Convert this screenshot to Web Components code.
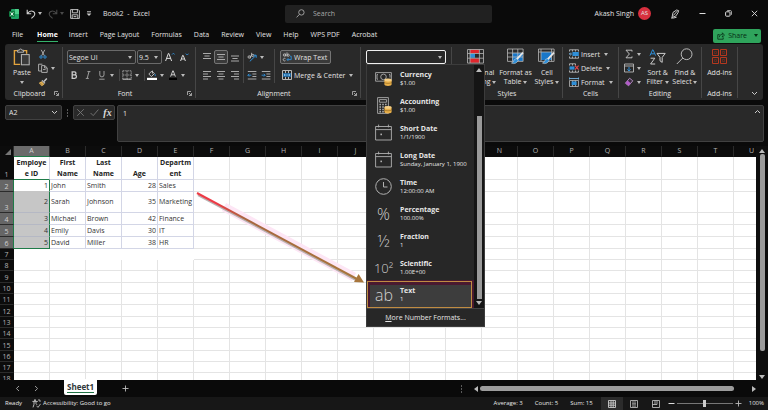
<!DOCTYPE html>
<html lang="en">
<head>
<meta charset="utf-8">
<title>Book2 - Excel</title>
<style>
  html, body { margin: 0; height: 100%; background: #0a0a0a; }
  body { font: 7px/9px "Open Sans", "Noto Sans", sans-serif; color: #e2e2e2; overflow: hidden; }
</style>
</head>
<body>
<xl-window>
  <xl-titlebar></xl-titlebar>
  <xl-tabs></xl-tabs>
  <xl-ribbon>
    <xl-group label="Clipboard" launcher>
      <xl-stack style="padding-left: 8px">
        <xl-tool tall icon="paste">Paste<br><xl-caret></xl-caret></xl-tool>
      </xl-stack>
      <xl-stack style="padding-left: 5px">
        <xl-tool icon="cut" label="Cut"></xl-tool>
        <xl-tool icon="copy" label="Copy" caret></xl-tool>
        <xl-tool icon="brush" label="Format Painter"></xl-tool>
      </xl-stack>
    </xl-group>
    <xl-group label="Font" launcher>
      <xl-stack rows="2" style="padding-left: 4px">
        <xl-row>
          <xl-combo label="Font" value="Segoe UI" style="width: 69px"></xl-combo>
          <xl-combo label="Font Size" value="9.5" style="width: 25px; margin: 0 1px"></xl-combo>
          <xl-tool icon="grow" label="Increase Font Size"></xl-tool>
          <xl-tool icon="shrink" label="Decrease Font Size"></xl-tool>
        </xl-row>
        <xl-row>
          <xl-tool icon="bold" label="Bold"></xl-tool>
          <xl-tool icon="italic" label="Italic"></xl-tool>
          <xl-tool icon="underline" label="Underline" caret></xl-tool>
          <xl-rule></xl-rule>
          <xl-tool icon="borders" label="Borders" caret></xl-tool>
          <xl-rule></xl-rule>
          <xl-tool icon="fill" label="Fill Color" caret></xl-tool>
          <xl-tool icon="color" label="Font Color" caret></xl-tool>
        </xl-row>
      </xl-stack>
    </xl-group>
    <xl-group label="Alignment" launcher>
      <xl-stack rows="2" style="padding-left: 4px">
        <xl-row>
          <xl-tool icon="top" label="Top Align"></xl-tool>
          <xl-tool icon="middle" label="Middle Align" pressed></xl-tool>
          <xl-tool icon="bottom" label="Bottom Align"></xl-tool>
        </xl-row>
        <xl-row>
          <xl-tool icon="left" label="Align Left"></xl-tool>
          <xl-tool icon="center" label="Center"></xl-tool>
          <xl-tool icon="right" label="Align Right"></xl-tool>
        </xl-row>
      </xl-stack>
      <xl-rule tall></xl-rule>
      <xl-stack rows="2">
        <xl-row><xl-tool icon="orient" label="Orientation" caret></xl-tool></xl-row>
        <xl-row>
          <xl-tool icon="outdent" label="Decrease Indent"></xl-tool>
          <xl-tool icon="indent" label="Increase Indent"></xl-tool>
        </xl-row>
      </xl-stack>
      <xl-rule tall></xl-rule>
      <xl-stack rows="2" style="padding-left: 4px">
        <xl-tool icon="wrap" pressed>Wrap Text</xl-tool>
        <xl-tool icon="merge" caret>Merge &amp; Center</xl-tool>
      </xl-stack>
    </xl-group>
    <xl-group>
      <xl-stack rows="2" style="flex: 1; padding: 3px 5px 0">
        <xl-combo label="Number Format" value="" open>
          <xl-format-menu></xl-format-menu>
        </xl-combo>
      </xl-stack>
    </xl-group>
    <xl-group label="Styles">
      <xl-row even>
        <xl-tool tall icon="conditional">Conditional<br>Formatting <xl-caret></xl-caret></xl-tool>
        <xl-tool tall icon="table">Format as<br>Table <xl-caret></xl-caret></xl-tool>
        <xl-tool tall icon="styles">Cell<br>Styles <xl-caret></xl-caret></xl-tool>
      </xl-row>
    </xl-group>
    <xl-group label="Cells">
      <xl-stack style="padding-left: 4px">
        <xl-tool icon="insert" caret>Insert</xl-tool>
        <xl-tool icon="delete" caret>Delete</xl-tool>
        <xl-tool icon="format" caret>Format</xl-tool>
      </xl-stack>
    </xl-group>
    <xl-group label="Editing">
      <xl-stack style="padding-left: 3px">
        <xl-tool icon="sum" label="AutoSum" caret></xl-tool>
        <xl-tool icon="filldown" label="Fill" caret></xl-tool>
        <xl-tool icon="eraser" label="Clear" caret></xl-tool>
      </xl-stack>
      <xl-row even style="flex: 1">
        <xl-tool tall icon="sort">Sort &amp;<br>Filter <xl-caret></xl-caret></xl-tool>
        <xl-tool tall icon="find">Find &amp;<br>Select <xl-caret></xl-caret></xl-tool>
      </xl-row>
    </xl-group>
    <xl-group label="Add-ins">
      <xl-row even><xl-tool tall icon="addins">Add-ins</xl-tool></xl-row>
    </xl-group>
    <xl-group collapse></xl-group>
  </xl-ribbon>
  <xl-formula-bar></xl-formula-bar>
  <xl-sheet></xl-sheet>
  <xl-sheet-bar></xl-sheet-bar>
  <xl-status-bar></xl-status-bar>
</xl-window>

<script>
const G = '#b8b8b8'
const B = '#2f8fd8'
const GRID = `<path d="M.5 .5h9v9h-9zM.5 3.5h9M.5 6.5h9M3.5 .5v9M6.5 .5v9" stroke="${G}"/>`
const PEN = `<path d="M16 4.6L9.4 11.6" stroke="#e6e6e6" stroke-width="1.8"/><path d="M9.6 10.6q-2.4.2-3 2.4-.6 1.8-2.2 2 4.4 2 6.8-2.6z" fill="${B}" stroke="#dcdcdc" stroke-width=".5"/>`

// name: [width, height, svg body]
const ICONS = {
  excel: [10, 10, '<rect x="2" y="0" width="8" height="10" rx="1" fill="#21a366"/><path d="M6 0h3a1 1 0 0 1 1 1v4H6z" fill="#4fd08c"/><rect y="2" width="6" height="6" rx="1" fill="#107c41"/><path d="M1.7 3.4l2.6 3.2M4.3 3.4L1.7 6.6" stroke="#fff" stroke-width=".9"/>'],
  undo: [10, 10, '<path d="M1.2 .8v4h4M1.4 4.6C3 2.4 5.2 1.4 7.2 2.4c2 1 2 3.4.6 4.8L5.4 9.4" stroke="#d0d0d0" stroke-width="1.1"/>'],
  redo: [10, 10, '<path d="M8.8 .8v4h-4M8.6 4.6C7 2.4 4.8 1.4 2.8 2.4c-2 1-2 3.4-.6 4.8l2.4 2.2" stroke="#4a4a4a" stroke-width="1.1"/>'],
  save: [10, 10, '<path d="M.6 .6h7.6l1.2 1.2v7.6H.6zM2.4 .6v3.2h5V.6M2.2 9.4V5.8h5.6v3.6M3.6 7.6h2.8" stroke="#d0d0d0" stroke-width=".9"/>'],
  qat: [6, 6, '<path d="M1 .8h4" stroke="#ccc"/><path d="M.6 2.6h4.8L3 5z" fill="#ccc"/>'],
  search: [9, 9, '<circle cx="5.4" cy="3.4" r="2.7" stroke="#aaa" stroke-width=".9"/><path d="M3.4 5.4L.6 8.4" stroke="#aaa" stroke-width=".9"/>'],
  pen: [10, 10, '<path d="M2 8.4l1-5L6.6 1l2 .6-.6 2.2L5.6 7.2zM3.2 6.6L7.4 2M1 9h2.6l3-.8" stroke="#ddd" stroke-width=".9"/>'],
  min: [7, 7, '<path d="M.5 3.5h6" stroke="#ddd"/>'],
  restore: [7, 7, '<rect x=".6" y="1.8" width="4.4" height="4.4" rx=".8" stroke="#ddd"/><path d="M2.2 .6h3.2q1 0 1 1v3.2" stroke="#ddd" stroke-width=".8"/>'],
  close: [7, 7, '<path d="M.8 .8l5.4 5.4M6.2 .8L.8 6.2" stroke="#ddd" stroke-width=".9"/>'],
  share: [8, 8, '<path d="M2.6 2.6H.8v4.6h5.4V5.4M2.4 5.2c0-2 1.2-2.8 3-2.8V.8l2 2.3-2 2V3.6" stroke="#062d14" stroke-width=".8"/>'],
  paste: [17, 18, `<path d="M4.6 2.6H1.4v13.8h5.8M10.4 2.6h3.2v3.2" stroke="#e2a33d" stroke-width="1.4"/><path d="M4.6 4.2V2.2h1.8a1.2 1.2 0 0 1 2.4 0h1.8v2z" stroke="${G}" fill="#292929"/><rect x="8.4" y="6.6" width="7.8" height="10.2" fill="#3a3a3a" stroke="${G}"/>`],
  cut: [10, 10, `<path d="M3.2 .8l3.2 6M6.8 .8l-3.2 6" stroke="${G}" stroke-width=".9"/><circle cx="3" cy="8" r="1.2" stroke="${B}"/><circle cx="7" cy="8" r="1.2" stroke="${B}"/>`],
  copy: [10, 10, `<path d="M3.4 8H.6V1.2h3.8M3.6 2.6h3.2l2.4 2.2v4.6H3.6zM6.6 2.8V5h2.4M5 6.6h2.6" stroke="${G}" stroke-width=".9"/>`],
  brush: [10, 10, '<path d="M6 4.6L8.8 1.6" stroke="#ccc" stroke-width="1.4"/><path d="M4 3.4l3 3" stroke="#ccc" stroke-width="1.2"/><path d="M3.6 4.2L.8 6l3 3.2 2.6-2z" fill="#e8b75a"/><path d="M2 7l1.6-.8M3 8.2l1.6-1" stroke="#6b4a12" stroke-width=".5"/>'],
  grow: [10, 10, `<path d="M.6 9L3.4 1.4h.4L6.6 9M1.6 6.4h4" stroke="#ddd"/><path d="M7 2.6L8.4 1.2l1.4 1.4" stroke="${B}" stroke-width=".9"/>`],
  shrink: [10, 10, `<path d="M1.6 9l2-5.6h.6L6.4 9M2.4 7h3.2" stroke="#ddd"/><path d="M6.8 1.6L8.2 3l1.4-1.4" stroke="${B}" stroke-width=".9"/>`],
  bold: [10, 10, '<path d="M3.2 1.8h2.2a1.5 1.5 0 0 1 0 3.1H3.2zM3.2 4.9h2.6a1.7 1.7 0 0 1 0 3.4H3.2z" stroke="#ccc" stroke-width="1.3"/>'],
  italic: [10, 10, '<path d="M4.4 1.6h3M2.8 8.4h3M6 1.6L4.2 8.4" stroke="#aaa" stroke-width=".9"/>'],
  underline: [10, 10, '<path d="M2.8 1v3.8a2.1 2.1 0 0 0 4.2 0V1M2.2 9.2h5.4" stroke="#aaa" stroke-width=".9"/>'],
  borders: [10, 10, `<path d="M.8 .8h8.4v8.4H.8zM5 .8v8.4M.8 5h8.4" stroke="${G}" stroke-width=".8" stroke-dasharray="1.2 .6"/><path d="M.6 9.2h8.8" stroke="${G}"/>`],
  fill: [10, 10, '<path d="M4.8 1L1.8 4l2.6 2.6 3-3zM5.4 .6v3" stroke="#ccc" stroke-width=".9"/><path d="M8 3.6q1.6 2 .2 2.6Q7 5.6 8 3.6" fill="#2f8fd8"/><rect y="7.8" width="10" height="2.2" fill="#fff"/>'],
  color: [10, 10, '<path d="M2.6 6.6l2.2-5.8h.4l2.2 5.8M3.4 4.8h3.2" stroke="#ccc"/><rect x="1" y="7.8" width="8" height="2.2" fill="#000"/>'],
  top: [10, 10, `<path d="M1 1.5h8M2.4 4h5.2M1 6.5h8" stroke="${G}" stroke-width=".9"/>`],
  middle: [10, 10, `<path d="M1 2.5h8M2.4 5h5.2M1 7.5h8" stroke="${G}" stroke-width=".9"/>`],
  bottom: [10, 10, `<path d="M1 4h8M2.4 6.5h5.2M1 9h8" stroke="${G}" stroke-width=".9"/>`],
  left: [10, 10, `<path d="M1 1.5h8M1 4h5M1 6.5h8M1 9h5" stroke="${G}" stroke-width=".9"/>`],
  center: [10, 10, `<path d="M1 1.5h8M2.5 4h5M1 6.5h8M2.5 9h5" stroke="${G}" stroke-width=".9"/>`],
  right: [10, 10, `<path d="M1 1.5h8M4 4h5M1 6.5h8M4 9h5" stroke="${G}" stroke-width=".9"/>`],
  orient: [10, 10, `<g stroke="#ccc" stroke-width=".8"><circle cx="2.2" cy="5" r="1.2"/><path d="M3.4 3.6v2.8M4.6 .8v3.8"/><circle cx="5.8" cy="3.4" r="1.1"/></g><path d="M2.8 9.4L9 3.4M6.6 3.2H9.2v2.6" stroke="${B}"/>`],
  outdent: [10, 10, `<path d="M.8 1.5h8.6M5.4 4h4M5.4 6.5h4M.8 9h8.6" stroke="${G}" stroke-width=".9"/><path d="M4.4 5.2H.8M2.2 3.8L.8 5.2l1.4 1.4" stroke="${B}" stroke-width=".9"/>`],
  indent: [10, 10, `<path d="M.8 1.5h8.6M5.4 4h4M5.4 6.5h4M.8 9h8.6" stroke="${G}" stroke-width=".9"/><path d="M.6 5.2h3.6M2.8 3.8l1.4 1.4-1.4 1.4" stroke="${B}" stroke-width=".9"/>`],
  wrap: [10, 10, `<g stroke="#ccc" stroke-width=".8"><circle cx="2.4" cy="3" r="1.1"/><path d="M3.6 1.6v2.8M5 .4v4"/><circle cx="6.2" cy="3.2" r="1.1"/><path d="M3.4 6.6a1.3 1.3 0 1 0 0 2"/></g><path d="M8 4.2h1.2v3.4H5.2M6.4 6.2L5 7.6 6.4 9" stroke="${B}" stroke-width=".9"/>`],
  merge: [10, 10, `${GRID}<rect x="1" y="3" width="8" height="4" fill="#1d5f96"/><path d="M2 5h6M3.2 3.8L2 5l1.2 1.2M6.8 3.8L8 5 6.8 6.2" stroke="#7fc4f5" stroke-width=".8"/>`],
  conditional: [17, 15, `<rect x="3" y=".6" width="9" height="3.6" fill="#e0262d"/><rect x="3" y="4.8" width="5" height="4" fill="${B}"/><rect x="3" y="9.4" width="9.4" height="4.4" fill="#e0262d"/><path d="M.5 .5h16v13.6H.5zM.5 4.5h16M.5 9.2h16M3 .5v13.6M12.4 .5v13.6" stroke="${G}" stroke-width=".8"/>`],
  table: [17, 17, `<rect x="5" y="5" width="11" height="8" fill="#1877c9"/><path d="M.5 1h15.6v12.4H.5zM.5 5h15.6M.5 9h15.6M5.6 1v12.4M10.8 1v12.4" stroke="${G}" stroke-width=".8"/>${PEN}`],
  styles: [17, 17, `<rect x="3" y="4" width="11" height="8" fill="#1877c9"/><path d="M.5 1h15.6v12.4H.5zM.5 4h15.6M3 1v12.4M13.6 1v12.4" stroke="${G}" stroke-width=".8"/>${PEN}`],
  insert: [10, 10, `<path d="M.5 2.5V.8h9v1.7M.5 7.5v1.7h9V7.5M3.5 .8v1.7M6.5 .8v1.7M3.5 7.5v1.7M6.5 7.5v1.7" stroke="${G}" stroke-width=".9"/><rect x="3.4" y="3" width="6.4" height="4" fill="${B}"/><path d="M3 5H.4M1.8 3.6L.4 5l1.4 1.4" stroke="#7fc4f5" stroke-width=".8"/>`],
  delete: [10, 10, `<path d="M.5 2.5V.8h6v1.7M.5 7.5v1.7h9V7.5M3.5 .8v1.7M3.5 7.5v1.7M6.5 7.5v1.7" stroke="${G}" stroke-width=".9"/><rect x=".5" y="3.4" width="5" height="3.2" fill="${B}"/><path d="M6 2.6l3.6 4M9.6 2.6L6 6.6" stroke="#e8484d" stroke-width="1.1"/>`],
  format: [10, 10, `<path d="M.5 .5v2M9.5 .5v2M.5 1.5h9" stroke="#7fc4f5" stroke-width=".8"/><path d="M.5 3.5h9v6h-9zM3.5 3.5v6M6.5 3.5v6" stroke="${G}" stroke-width=".8"/><rect x="2.6" y="4.4" width="5" height="3.6" fill="${B}"/>`],
  sum: [10, 10, '<path d="M8 2.6V1.2H2L5.4 5 2 8.8h6V7.4" stroke="#ccc" stroke-width=".9"/>'],
  filldown: [10, 10, `<path d="M.5 1h9v8h-9zM.5 3h9" stroke="${G}" stroke-width=".9"/><path d="M5 4v4M3.4 6.4L5 8l1.6-1.6" stroke="${B}"/>`],
  eraser: [10, 10, '<path d="M5.6 1.2l3.2 2.6-4.2 5-3.2-2.6z" stroke="#c9a3d4" stroke-width=".8" fill="#3a2a40"/><path d="M3.6 3.6l3.2 2.6-2.2 2.6-3.2-2.6z" fill="#b25cc9"/>'],
  sort: [17, 16, `<path d="M1 6.6L3.6 .8h.4L6.6 6.6M2 4.8h3.6" stroke="${B}"/><path d="M1.6 9.2h4.2L1.6 15h4.6" stroke="#ccc"/><path d="M8 4.4h8.2l-3 4v5l-2.2-1.6V8.4z" stroke="#ccc"/>`],
  find: [17, 17, '<circle cx="10.6" cy="6.2" r="5.4" stroke="#bbb"/><path d="M6.8 10L.8 16" stroke="#bbb"/>'],
  addins: [17, 17, '<path d="M1.5 1.5h6v6h-6zM9.5 1.5h6v6h-6zM1.5 9.5h6v6h-6zM9.5 9.5h6v6h-6z" stroke="#b5381f"/><path d="M3.5 3.5h2v2h-2zM11.5 3.5h2v2h-2zM3.5 11.5h2v2h-2zM11.5 11.5h2v2h-2z" stroke="#8a2a18" stroke-width=".6"/>'],
  launcher: [5, 5, '<path d="M.5 4V.5H4M2 2l2.4 2.4M4.5 2v2.5H2" stroke="#bbb" stroke-width=".8"/>'],
  down: [7, 5, '<path d="M1 1l2.5 2.5L6 1" stroke="#ccc"/>'],
  up: [7, 5, '<path d="M1 4l2.5-2.5L6 4" stroke="#ccc"/>'],
  prev: [5, 7, '<path d="M4 1L1.4 3.5 4 6" stroke="#999"/>'],
  next: [5, 7, '<path d="M1 1l2.6 2.5L1 6" stroke="#999"/>'],
  plus: [7, 7, '<path d="M3.5 .5v6M.5 3.5h6" stroke="#bbb" stroke-width=".9"/>'],
  dots: [3, 8, '<path d="M1 1h1M1 4h1M1 7h1" stroke="#aaa"/>'],
  cancel: [9, 9, '<path d="M1.2 1.2l6.6 6.6M7.8 1.2L1.2 7.8" stroke="#777" stroke-width=".9"/>'],
  enter: [9, 9, '<path d="M.6 5l2.6 2.6 5.2-6" stroke="#777" stroke-width=".9"/>'],
  access: [9, 9, '<circle cx="3" cy="1.2" r=".9" fill="#ccc"/><path d="M.4 2.4h5.4M2 2.6v2.8L1 8.4M4 2.6v2l1 1.2" stroke="#ccc" stroke-width=".9"/><path d="M4.6 6.8L6 8.4l2.6-3.6M6 1h2v2" stroke="#ccc" stroke-width=".8"/>'],
  normal: [8, 8, '<path d="M.5 .5h7v7h-7zM.5 3h7M.5 5.2h7M3 .5v7M5.2 .5v7" stroke="#ccc" stroke-width=".9"/>'],
  layout: [8, 8, '<path d="M.5 .5h7v7h-7z" stroke="#ccc" stroke-width=".8"/><path d="M2 2h4M2 3.4h4M2 4.8h4M2 6.2h4" stroke="#bbb" stroke-width=".7"/>'],
  breaks: [8, 8, '<path d="M.5 .5h7v7h-7zM.5 4.5h4.5v-4M3 .5v4" stroke="#ccc" stroke-width=".8"/>'],
  currency: [17, 17, '<path d="M.6 2.6h15.8v8.6H.6zM3 4.6H2v4.6h1M14 4.6h1v3" stroke="#aaa" stroke-width=".9"/><circle cx="8.5" cy="6.9" r="2.8" stroke="#aaa" stroke-width=".9"/><path d="M9.4 10v4.6a3.6 1.4 0 0 0 7.2 0V10z" fill="#e9b04a"/><ellipse cx="13" cy="10" rx="3.6" ry="1.4" fill="#f5cf85"/><path d="M9.4 12.2a3.6 1.2 0 0 0 7.2 0" stroke="#7a5210" stroke-width=".5"/>'],
  accounting: [17, 17, '<path d="M2.6 .6h10.8v15.8H2.6zM4.4 2.6h7.2v2.6H4.4z" stroke="#aaa" stroke-width=".9"/><path d="M4.4 7.5h7.6M4.4 10h7.6M4.4 12.5h7.6M4.4 14.8h7.6" stroke="#aaa" stroke-width="1.4" stroke-dasharray="1.6 1.2"/><path d="M9.4 10.4v4.6a3.6 1.4 0 0 0 7.2 0v-4.6z" fill="#e9b04a"/><ellipse cx="13" cy="10.4" rx="3.6" ry="1.4" fill="#f5cf85"/><path d="M9.4 12.6a3.6 1.2 0 0 0 7.2 0" stroke="#7a5210" stroke-width=".5"/>'],
  date: [17, 17, '<path d="M.6 2.5h15.8v13.5H.6zM.6 5.6h15.8M3.6 .6v2.8M13.4 .6v2.8" stroke="#b0b0b0" stroke-width=".9"/><rect x="5.4" y="9.6" width="1.6" height="1.6" fill="#b0b0b0"/>'],
  time: [17, 17, '<circle cx="8.5" cy="8.5" r="7.8" stroke="#b0b0b0"/><path d="M8.5 4v5h4" stroke="#b0b0b0"/>']
}

/** Registers an element whose shadow root is cloned from a template. */
function define (name, html, setup) {
  const template = document.createElement('template')
  template.innerHTML = html
  customElements.define(name, class extends HTMLElement {
    constructor () {
      super()
      this.attachShadow({ mode: 'open' })
    }

    connectedCallback () {
      if (this.shadowRoot.firstChild) return
      this.shadowRoot.appendChild(template.content.cloneNode(true))
      if (setup) setup(this, this.shadowRoot)
    }
  })
}

define('xl-icon', '<style>:host { display: block; flex: none; } svg { display: block; fill: none; }</style>', (el, root) => {
  const [w, h, body] = ICONS[el.getAttribute('name')]
  root.innerHTML += `<svg width="${w}" height="${h}" viewBox="0 0 ${w} ${h}" aria-hidden="true">${body}</svg>`
})

define('xl-caret', `
  <style>
    :host { display: inline-block; vertical-align: middle; width: 0; border: 2px solid transparent; border-top: 3px solid #bbb; border-bottom: 0; }
    :host([up]) { border-top: 0; border-bottom: 4px solid #bbb; border-inline-width: 3px; }
    :host([down]) { border-top-width: 4px; border-inline-width: 3px; }
    :host([prev]) { border: 3px solid transparent; border-right: 4px solid #bbb; border-left: 0; }
    :host([next]) { border: 3px solid transparent; border-left: 4px solid #bbb; border-right: 0; }
    :host([dim]) { border-top-color: #4a4a4a; }
  </style>
`)

define('xl-window', `
  <style>
    :host { display: flex; flex-direction: column; height: 100vh; }
    ::slotted(*) { flex: none; }
    ::slotted(xl-sheet) { flex: 1; min-height: 0; }
  </style>
  <slot></slot>
`)

define('xl-titlebar', `
  <style>
    :host { display: grid; grid-template-columns: 285fr 207fr 276fr; align-items: center; height: 27px; }
    div { display: flex; align-items: center; }
    button { display: flex; align-items: center; gap: 2px; border: 0; padding: 0; background: none; color: inherit; font: inherit; }
    .left { gap: 7px; padding-left: 9px; }
    .left button { margin-right: -1px; }
    .left span { margin-left: 5px; }
    label { display: flex; align-items: center; gap: 8px; height: 18px; padding-left: 11px; border-radius: 2px; background: #212121; }
    input { flex: 1; min-width: 0; border: 0; padding: 0; background: none; font: inherit; outline: 0; }
    input::placeholder { color: #a8a8a8; opacity: 1; }
    .right { justify-content: flex-end; gap: 19px; padding-right: 10px; }
    .user { gap: 4px; }
    .avatar { width: 13px; height: 13px; border-radius: 50%; background: #d8303f; line-height: 13px; justify-content: center; font-size: 6px; }
  </style>
  <div class="left">
    <xl-icon name="excel"></xl-icon>
    <button aria-label="Undo"><xl-icon name="undo"></xl-icon><xl-caret></xl-caret></button>
    <button aria-label="Redo"><xl-icon name="redo"></xl-icon><xl-caret dim></xl-caret></button>
    <button aria-label="Save"><xl-icon name="save"></xl-icon></button>
    <button aria-label="Customize Quick Access Toolbar"><xl-icon name="qat"></xl-icon></button>
    <span>Book2&nbsp; -&nbsp; Excel</span>
  </div>
  <label><xl-icon name="search"></xl-icon><input type="search" placeholder="Search" aria-label="Search"></label>
  <div class="right">
    <div class="user">Akash Singh <div class="avatar">AS</div></div>
    <button aria-label="Draw"><xl-icon name="pen"></xl-icon></button>
    <button aria-label="Minimize"><xl-icon name="min"></xl-icon></button>
    <button aria-label="Restore"><xl-icon name="restore"></xl-icon></button>
    <button aria-label="Close"><xl-icon name="close"></xl-icon></button>
  </div>
`)

define('xl-tabs', `
  <style>
    :host { display: flex; align-items: center; justify-content: space-between; height: 17px; padding: 0 7px 0 12px; }
    nav { display: flex; gap: 12px; }
    a { color: inherit; text-decoration: none; line-height: 12px; border-bottom: 1px solid transparent; }
    a[aria-current] { font-weight: 700; border-color: #35b36b; color: #fff; margin: 0 -1px 0 2px; }
    button { display: flex; align-items: center; gap: 3px; height: 14px; padding: 0 3px 0 4px; border: 0; border-radius: 2px; background: #2fa45c; color: #062d14; font: inherit; }
    xl-caret { margin-left: 4px; border-top-color: #062d14; }
  </style>
  <nav>
    <a href="#file">File</a>
    <a href="#home" aria-current="page">Home</a>
    <a href="#insert">Insert</a>
    <a href="#layout">Page Layout</a>
    <a href="#formulas">Formulas</a>
    <a href="#data">Data</a>
    <a href="#review">Review</a>
    <a href="#view">View</a>
    <a href="#help">Help</a>
    <a href="#wps">WPS PDF</a>
    <a href="#acrobat">Acrobat</a>
  </nav>
  <button><xl-icon name="share"></xl-icon>Share<xl-caret></xl-caret></button>
`)

define('xl-ribbon', `
  <style>
    :host { display: grid; grid-template-columns: 58fr 133fr 165fr 91fr 111fr 56fr 83fr 36fr 25fr; margin: 0 5px; height: 56px; border-radius: 3px; background: #292929; }
    ::slotted(*) { min-width: 0; }
  </style>
  <slot></slot>
`)

define('xl-group', `
  <style>
    :host { display: flex; flex-direction: column; margin: 3px 0 2px; border-right: 1px solid #464646; }
    :host([collapse]) { border: 0; }
    .body { display: flex; height: 42px; }
    .foot { display: flex; align-items: center; height: 9px; }
    .foot span { flex: 1; text-align: center; white-space: nowrap; }
    button { border: 0; padding: 0 3px 0 0; background: none; }
    .fold { margin-left: auto; padding-right: 5px; }
  </style>
  <div class="body"><slot></slot></div>
  <div class="foot"><span></span></div>
`, (el, root) => {
  root.querySelector('span').textContent = el.getAttribute('label') || ''
  const foot = root.querySelector('.foot')
  if (el.hasAttribute('launcher')) {
    foot.insertAdjacentHTML('beforeend', '<button aria-label="Settings"><xl-icon name="launcher"></xl-icon></button>')
  }
  if (el.hasAttribute('collapse')) {
    foot.innerHTML = '<button class="fold" aria-label="Collapse the Ribbon"><xl-icon name="down"></xl-icon></button>'
  }
})

define('xl-stack', `
  <style>
    :host { display: flex; flex-direction: column; align-items: flex-start; box-sizing: border-box; }
    :host([rows]) { gap: 4px; padding-top: 3px; }
    ::slotted(xl-combo) { align-self: stretch; }
  </style>
  <slot></slot>
`)

define('xl-row', `
  <style>
    :host { display: flex; align-items: center; }
    :host([even]) { flex: 1; align-items: flex-start; justify-content: space-evenly; }
  </style>
  <slot></slot>
`)

define('xl-rule', `
  <style>
    :host { display: block; width: 1px; height: 12px; margin-left: 3px; background: #464646; }
    :host([tall]) { height: 34px; margin: 2px 1px 0; }
  </style>
`)

define('xl-tool', `
  <style>
    :host { display: block; }
    button { display: flex; align-items: center; gap: 3px; box-sizing: border-box; height: 14px; padding: 0 2px; border: 1px solid transparent; border-width: 1px 0; background: none; color: inherit; font: inherit; white-space: nowrap; }
    button.text { gap: 2px; }
    :host([pressed]) button { border: 1px solid #757575; padding-inline: 1px; border-radius: 2px; background: #3a3a3a; }
    :host([pressed]) button.text { padding-right: 3px; }
    :host([tall]) button { flex-direction: column; gap: 3px; height: auto; padding: 1px 0 0; border: 0; text-align: center; }
    :host([tall]) .icon { display: flex; align-items: center; height: 17px; }
    .end { margin-left: 2px; }
  </style>
  <button><span class="icon"></span></button>
`, (el, root) => {
  const button = root.querySelector('button')
  root.querySelector('.icon').innerHTML = `<xl-icon name="${el.getAttribute('icon')}"></xl-icon>`
  if (el.hasAttribute('label')) {
    button.setAttribute('aria-label', el.getAttribute('label'))
  } else {
    button.classList.add('text')
    button.insertAdjacentHTML('beforeend', '<span><slot></slot></span>')
  }
  if (el.hasAttribute('caret')) {
    button.insertAdjacentHTML('beforeend', `<xl-caret${el.hasAttribute('label') ? '' : ' class="end"'}></xl-caret>`)
  }
})

define('xl-combo', `
  <style>
    :host { display: block; position: relative; }
    .box { display: flex; align-items: center; box-sizing: border-box; height: 14px; padding-right: 3px; border: 1px solid #6a6a6a; border-radius: 2px; background: #292929; }
    :host([open]) .box { border-color: #f0f0f0; }
    select { flex: 1; min-width: 0; appearance: none; border: 0; padding: 0 0 0 1px; background: none; color: inherit; font: inherit; outline: 0; }
    ::slotted(*) { position: absolute; top: 100%; left: 0; z-index: 5; }
  </style>
  <div class="box"><select><option></option></select><xl-caret></xl-caret></div>
  <slot></slot>
`, (el, root) => {
  root.querySelector('select').setAttribute('aria-label', el.getAttribute('label'))
  root.querySelector('option').textContent = el.getAttribute('value')
})

define('xl-format-menu', `
  <style>
    :host { display: block; box-sizing: border-box; width: 119px; border: 1px solid #3c3c3c; background: #272727; color: #e6e6e6; }
    .list { display: grid; grid-template-columns: minmax(0, 1fr) 10px; border-bottom: 1px solid #444; }
    .track { display: flex; flex-direction: column; align-items: center; gap: 2px; padding: 3px 0; background: #151515; }
    .thumb { flex: 1; width: 5px; margin-top: 42px; background: #9a9a9a; }
    .more { display: block; width: 100%; padding: 4px 0; border: 0; background: none; color: inherit; font: inherit; text-align: center; }
  </style>
  <div class="list">
    <div role="listbox" aria-label="Number formats">
      <xl-format icon="currency" name="Currency">$1.00</xl-format>
      <xl-format icon="accounting" name="Accounting">$1.00</xl-format>
      <xl-format icon="date" name="Short Date">1/1/1900</xl-format>
      <xl-format icon="date" name="Long Date">Sunday, January 1, 1900</xl-format>
      <xl-format icon="time" name="Time">12:00:00 AM</xl-format>
      <xl-format glyph="%" name="Percentage">100.00%</xl-format>
      <xl-format glyph="½" name="Fraction">1</xl-format>
      <xl-format glyph="10²" name="Scientific">1.00E+00</xl-format>
      <xl-format glyph="ab" name="Text" marked>1</xl-format>
    </div>
    <div class="track"><xl-caret up></xl-caret><div class="thumb"></div><xl-caret down></xl-caret></div>
  </div>
  <button class="more"><u>M</u>ore Number Formats...</button>
`)

define('xl-format', `
  <style>
    :host { display: block; }
    button { display: grid; grid-template-columns: 33px 1fr; align-items: center; box-sizing: border-box; width: 100%; height: 27px; padding: 0; border: 0; background: none; color: inherit; font: inherit; font-size: 6px; text-align: left; white-space: nowrap; }
    .icon { display: flex; justify-content: center; color: #d0d0d0; font: 300 16px/20px "Open Sans", sans-serif; }
    .long { font-size: 13px; }
    b { display: block; font-size: 7px; }
    :host([marked]) { background: #4a1a30; padding-right: 2px; box-shadow: 0 -1px #4a1a30; }
    :host([marked]) button { grid-template-columns: 32px 1fr; border: 1px solid #c08c42; background: #3d3d3d; box-shadow: inset 0 3px #4a1a30, inset 2px 0 #4a1a30; }
  </style>
  <button role="option"><span class="icon"></span><span><b></b><slot></slot></span></button>
`, (el, root) => {
  const icon = root.querySelector('.icon')
  const glyph = el.getAttribute('glyph')
  if (glyph) {
    icon.textContent = glyph
    icon.classList.toggle('long', glyph.length > 2)
  } else {
    icon.innerHTML = `<xl-icon name="${el.getAttribute('icon')}"></xl-icon>`
  }
  root.querySelector('b').textContent = el.getAttribute('name')
})

define('xl-formula-bar', `
  <style>
    :host { display: flex; align-items: flex-start; height: 37px; padding: 5px 4px 4px 5px; }
    .box { display: flex; align-items: center; box-sizing: border-box; height: 15px; border: 1px solid #414141; border-radius: 2px; background: #292929; }
    .name { width: 57px; padding: 0 3px; }
    input, textarea { flex: 1; min-width: 0; border: 0; padding: 0; background: none; color: inherit; font: inherit; outline: 0; resize: none; }
    .grip { margin: 4px 4px 0; }
    .fx { width: 42px; justify-content: space-around; margin-right: 2px; }
    button { border: 0; padding: 0; background: none; color: #ddd; font: italic 700 10px/12px "Liberation Serif", serif; }
    .formula { flex: 1; height: 37px; align-items: flex-start; padding: 3px 2px 0 5px; }
  </style>
  <div class="box name"><input value="A2" aria-label="Name Box"><xl-icon name="down"></xl-icon></div>
  <xl-icon class="grip" name="dots"></xl-icon>
  <div class="box fx">
    <button aria-label="Cancel"><xl-icon name="cancel"></xl-icon></button>
    <button aria-label="Enter"><xl-icon name="enter"></xl-icon></button>
    <button aria-label="Insert Function">fx</button>
  </div>
  <div class="box formula"><textarea rows="3" aria-label="Formula Bar">1</textarea><xl-icon name="up"></xl-icon></div>
`)

const COLUMNS = 'ABCDEFGHIJKLMNOPQRSTU'.split('')
const HEIGHTS = [22, 12, 21, 12, 12, 12, 11, 11, 12, 11, 11, 12, 11, 11, 12, 11, 11, 11]
const DATA = [
  ['Employe e ID', 'First Name', 'Last Name', 'Age', 'Departm ent'],
  [1, 'John', 'Smith', 28, 'Sales'],
  [2, 'Sarah', 'Johnson', 35, 'Marketing'],
  [3, 'Michael', 'Brown', 42, 'Finance'],
  [4, 'Emily', 'Davis', 30, 'IT'],
  [5, 'David', 'Miller', 38, 'HR']
]

define('xl-sheet', `
  <style>
    :host { display: grid; grid-template-columns: 1fr 12px; position: relative; }
    .view { overflow: hidden; background: #fff; min-width: 0; }
    table { table-layout: fixed; border-collapse: separate; border-spacing: 0; width: 770px; color: #333; line-height: 10px; }
    col { width: 36px; }
    col:first-child { width: 14px; }
    th, td { box-sizing: border-box; padding: 0; border: solid #e4e4e4; border-width: 0 1px 1px 0; overflow: hidden; }
    thead th, tbody th { background: #0c0c0c; color: #b4b4b4; font-weight: 400; border-color: #2b2b2b; }
    thead th { height: 11px; border-bottom-color: #0c0c0c; }
    thead .on { background: #6b6b6b; color: #d0d0d0; border-bottom-color: #1e7b48; }
    tbody th { vertical-align: bottom; border-right-color: #0c0c0c; line-height: 9px; }
    tbody .on { background: #666; color: #d0d0d0; border-right-color: #1e7b48; }
    .corner { vertical-align: bottom; }
    .corner i { display: block; margin: 0 2px 1px auto; width: 0; border: 3px solid; border-color: transparent #777 #777 transparent; }
    .data { border-color: #d3d6e6; padding: 0 1px; }
    .num { text-align: right; }
    .head { font-weight: 700; text-align: center; vertical-align: bottom; line-height: 11px; color: #222; overflow: visible; padding: 0; }
    .sel { background: #c6c6c6; border-right: 1px solid #1e7b48; border-bottom-color: #b5b8c4; }
    .active { background: #fff; border-bottom-color: #c6c6c6; }
    .above, .last { border-bottom-color: #1e7b48; }
    .bare { border-color: #fff; }
    .bar { display: flex; flex-direction: column; align-items: center; background: #0e0e0e; padding: 3px 0 1px; }
    .thumb { flex: 1; width: 5px; margin: 1px 0 24px; border-radius: 2px; background: #9c9c9c; }
    .arrow { position: absolute; left: 190px; top: 41px; fill: none; z-index: 6; pointer-events: none; }
  </style>
  <div class="view">
    <table>
      <colgroup></colgroup>
      <thead><tr><th class="corner" aria-label="Select All"><i></i></th></tr></thead>
      <tbody></tbody>
    </table>
  </div>
  <div class="bar"><xl-caret up></xl-caret><div class="thumb"></div><xl-caret down></xl-caret></div>
  <svg class="arrow" width="176" height="100" viewBox="0 0 176 100" aria-hidden="true">
    <defs>
      <linearGradient id="fade"><stop offset=".12" stop-color="#ee3b46"/><stop offset=".3" stop-color="#a8663f"/><stop offset="1" stop-color="#a8763c"/></linearGradient>
    </defs>
    <path d="M34 20L164 90" stroke="#fde6f5" stroke-width="9"/>
    <path d="M8 8L166 93" stroke="#b9b2b2" stroke-width="2"/>
    <path d="M7 6L167 92" stroke="url(#fade)" stroke-width="2"/>
    <path d="M174 95.5l-10-.5 4.6-8z" fill="#a8763c"/>
  </svg>
`, (el, root) => {
  root.querySelector('colgroup').innerHTML = '<col>'.repeat(COLUMNS.length + 1)
  root.querySelector('thead tr').insertAdjacentHTML('beforeend',
    COLUMNS.map((name, i) => `<th scope="col"${i === 0 ? ' class="on"' : ''}>${name}</th>`).join(''))
  root.querySelector('tbody').innerHTML = HEIGHTS.map((height, r) => {
    const cells = COLUMNS.map((_, c) => {
      const value = DATA[r] && DATA[r][c]
      const names = []
      if (value !== undefined) names.push('data')
      if (value !== undefined && r === 0) names.push('head')
      if (typeof value === 'number') names.push('num')
      if (c === 0 && r === 0) names.push('above')
      if (c === 0 && r > 0 && r < 6) names.push('sel')
      if (c === 0 && r === 1) names.push('active')
      if (c === 0 && r === 5) names.push('last')
      if (r === 6 && c < 5) names.push('bare')
      return `<td class="${names.join(' ')}">${value === undefined ? '' : value}</td>`
    })
    const on = r > 0 && r < 6 ? ' class="on"' : ''
    return `<tr style="height: ${height}px"><th scope="row"${on}>${r + 1}</th>${cells.join('')}</tr>`
  }).join('')
})

define('xl-sheet-bar', `
  <style>
    :host { display: grid; grid-template-columns: 457fr 311fr; height: 17px; background: #0a0a0a; }
    div { display: flex; align-items: center; }
    button { border: 0; padding: 0; background: none; color: inherit; font: inherit; }
    .tabs { padding-left: 15px; gap: 14px; align-items: stretch; }
    .tab { margin: -1px 11px 2px; padding: 0 3px; border-radius: 0 0 2px 2px; background: #fff; color: #30383a; font: 700 8px/10px "Open Sans", sans-serif; z-index: 1; }
    .tab span { border-bottom: 1px solid #217346; }
    .scroll { padding: 0 12px 0 3px; }
    .thumb { flex: 1; height: 5px; margin: 0 18px 0 2px; border-radius: 3px; background: #9c9c9c; }
    .scroll xl-icon { margin-right: 11px; }
  </style>
  <div class="tabs">
    <button aria-label="Previous sheet"><xl-icon name="prev"></xl-icon></button>
    <button aria-label="Next sheet"><xl-icon name="next"></xl-icon></button>
    <button class="tab"><span>Sheet1</span></button>
    <button aria-label="New sheet"><xl-icon name="plus"></xl-icon></button>
  </div>
  <div class="scroll"><xl-icon name="dots"></xl-icon><xl-caret prev></xl-caret><div class="thumb"></div><xl-caret next></xl-caret></div>
`)

define('xl-status-bar', `
  <style>
    :host { display: flex; align-items: center; height: 13px; padding: 0 4px 0 5px; background: #171717; color: #e6e6e6; font-size: 6px; }
    .access { display: flex; align-items: center; gap: 2px; margin: 0 auto 0 10px; }
    .sums { display: flex; gap: 12px; margin-right: 8px; }
    button { display: flex; align-items: center; justify-content: center; width: 22px; height: 13px; border: 0; padding: 0; background: none; }
    button[aria-pressed] { background: #2b2b2b; }
    .step { width: 9px; }
    input { width: 56px; height: 9px; margin: 0 1px; appearance: none; background: linear-gradient(#777, #777) center / 100% 1px no-repeat; }
    input::-webkit-slider-thumb { appearance: none; width: 3px; height: 7px; background: #ccc; }
    output { margin-left: 6px; }
  </style>
  <span>Ready</span>
  <span class="access"><xl-icon name="access"></xl-icon>Accessibility: Good to go</span>
  <div class="sums"><span>Average: 3</span><span>Count: 5</span><span>Sum: 15</span></div>
  <button aria-label="Normal" aria-pressed="true"><xl-icon name="normal"></xl-icon></button>
  <button aria-label="Page Layout"><xl-icon name="layout"></xl-icon></button>
  <button aria-label="Page Break Preview"><xl-icon name="breaks"></xl-icon></button>
  <button class="step" aria-label="Zoom Out"><xl-icon name="min"></xl-icon></button>
  <input type="range" min="10" max="190" value="100" aria-label="Zoom">
  <button class="step" aria-label="Zoom In"><xl-icon name="plus"></xl-icon></button>
  <output>100%</output>
`)
</script>
</body>
</html>
